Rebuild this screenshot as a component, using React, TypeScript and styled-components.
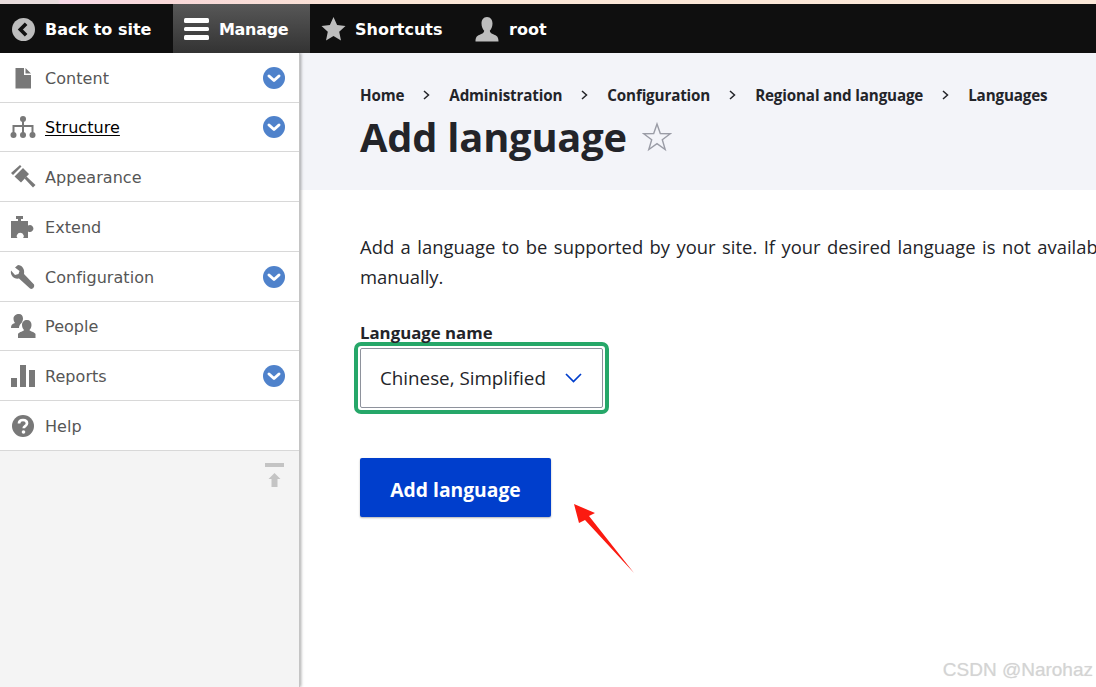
import React from "react";
import styled, { createGlobalStyle } from "styled-components";

const Global = createGlobalStyle`
  html, body { margin: 0; padding: 0; height: 100%; background: #fff; overflow: hidden; }
  #root { height: 100%; }
  * { box-sizing: border-box; }
`;

const Page = styled.div`
  position: relative;
  width: 1096px;
  height: 687px;
  display: flex;
  flex-direction: column;
  overflow: hidden;
  font-family: "Open Sans", "Noto Sans", sans-serif;
`;

const TopStrip = styled.div`
  height: 4px;
  flex: none;
  background: linear-gradient(90deg, #e8dcdc 0, #e8dcdc 58px, #f6d8e6 60px, #f8d8d8 170px, #fbe6d6 400px, #fbe8d8 1096px);
`;

const Toolbar = styled.nav`
  height: 49px;
  flex: none;
  display: flex;
  align-items: stretch;
  background: #0f0f0f;
  font-family: "DejaVu Sans", Verdana, sans-serif;
  font-weight: 700;
  font-size: 16px;
  color: #fff;
  position: relative;
  z-index: 2;
`;

const ToolItem = styled.div<{ $w: number; $active?: boolean; $gap: number; $pl: number }>`
  width: ${(p) => p.$w}px;
  display: flex;
  align-items: center;
  gap: ${(p) => p.$gap}px;
  padding-left: ${(p) => p.$pl}px;
  padding-top: 1px;
  letter-spacing: ${(p) => (p.$active ? "-0.3px" : "0")};
  background: ${(p) => (p.$active ? "linear-gradient(#575757, #333333)" : "transparent")};
  white-space: nowrap;
`;

const Body = styled.div`
  flex: 1;
  display: flex;
  min-height: 0;
`;

const Sidebar = styled.aside`
  width: 300px;
  flex: none;
  background: #f4f4f4;
  border-right: 1px solid #c4c4c4;
  box-shadow: 1px 0 3px rgba(0, 0, 0, 0.35);
  display: flex;
  flex-direction: column;
  font-family: "DejaVu Sans", Verdana, sans-serif;
  position: relative;
  z-index: 1;
`;

const MenuRow = styled.div<{ $h: number }>`
  height: ${(p) => p.$h}px;
  flex: none;
  display: flex;
  align-items: center;
  background: #fff;
  border-bottom: 1px solid #d8d8d8;
  padding: 0 14px 0 10px;
`;

const MenuIcon = styled.span`
  width: 26px;
  height: 26px;
  flex: none;
  display: flex;
  align-items: center;
  justify-content: center;
  margin-right: 9px;
`;

const MenuLabel = styled.span<{ $current?: boolean }>`
  flex: 1;
  font-size: 16px;
  line-height: 22px;
  padding-top: 2px;
  letter-spacing: 0.05px;
  color: ${(p) => (p.$current ? "#000" : "#565656")};
  text-decoration: ${(p) => (p.$current ? "underline" : "none")};
  text-underline-offset: 2px;
`;

const Collapse = styled.div`
  display: flex;
  justify-content: flex-end;
  padding: 12px 14px 0 0;
`;

const Main = styled.main`
  flex: 1;
  min-width: 0;
  display: flex;
  flex-direction: column;
  color: #232429;
  overflow: hidden;
`;

const Header = styled.header`
  height: 137px;
  flex: none;
  background: #f3f4f9;
  padding: 31px 0 0 60px;
`;

const Crumbs = styled.div`
  display: flex;
  align-items: center;
  height: 22px;
  font-size: 15.2px;
  font-weight: 700;
  white-space: nowrap;
  letter-spacing: -0.15px;
`;

const Sep = styled.span`
  width: 45px;
  flex: none;
  display: flex;
  justify-content: center;
`;

const TitleRow = styled.div`
  display: flex;
  align-items: center;
  gap: 15px;
  margin-top: 7px;
`;

const Title = styled.h1`
  margin: 0;
  font-size: 39.8px;
  line-height: 48px;
  font-weight: 700;
  letter-spacing: -0.2px;
  white-space: nowrap;
`;

const Content = styled.div`
  padding: 42px 0 0 60px;
`;

const Intro = styled.p`
  margin: 0;
  width: 1030px;
  font-size: 18.4px;
  line-height: 30px;
  word-spacing: 1.7px;
`;

const FieldLabel = styled.label`
  display: block;
  margin-top: 30px;
  font-size: 16.8px;
  font-weight: 700;
  line-height: 22px;
`;

const SelectRing = styled.div`
  width: 255px;
  height: 72px;
  margin: -2px 0 0 -6px;
  border: 4px solid #26a769;
  border-radius: 7px;
  padding: 2px;
  background: #fff;
`;

const SelectBox = styled.div`
  height: 100%;
  border: 1px solid #8e929c;
  border-radius: 2px;
  display: flex;
  align-items: center;
  justify-content: space-between;
  padding: 0 20px 0 19px;
  font-size: 18.8px;
  white-space: nowrap;
`;

const Submit = styled.button`
  display: block;
  width: 191px;
  height: 59px;
  margin-top: 44px;
  padding: 3px 0 0;
  border: 0;
  border-radius: 2px;
  background: #003ecc;
  box-shadow: 0 1px 2px rgba(0, 0, 0, 0.3);
  color: #fff;
  font-family: inherit;
  font-size: 19.3px;
  font-weight: 700;
`;

const ArrowMark = styled.svg`
  position: absolute;
  left: 570px;
  top: 500px;
`;

const Watermark = styled.div`
  position: absolute;
  right: 3px;
  bottom: 6px;
  font-family: "Liberation Sans", Arial, sans-serif;
  font-size: 19px;
  color: #d4d4d4;
  text-shadow: 0 0 1px #e4e4e4;
`;

const G = "#787878";
const T = "#bdbdbd";

const Chevron = () => (
  <svg width="22" height="22" viewBox="0 0 22 22">
    <circle cx="11" cy="11" r="11" fill="#4f82cb" />
    <path d="M6 9l5 4.500L16 9" fill="none" stroke="#fff" strokeWidth="3" strokeLinecap="round" strokeLinejoin="round" />
  </svg>
);

const icons: Record<string, React.ReactNode> = {
  content: (
    <svg width="18" height="22" viewBox="0 0 18 22"><path d="M1.500 1h8.500v7h7v13.500H1.500zM11.500 1l5.500 5.500h-5.500z" fill={G} /></svg>
  ),
  structure: (
    <svg width="26" height="24" viewBox="0 0 26 24" fill={G}>
      <circle cx="13" cy="4" r="3" /><circle cx="3.500" cy="20" r="3" /><circle cx="13" cy="20" r="3" /><circle cx="22.500" cy="20" r="3" />
      <path d="M12 6h2v4h9.500v8h-2v-6H14v6h-2v-6H4.500v6h-2v-8H12z" />
    </svg>
  ),
  appearance: (
    <svg width="26" height="26" viewBox="0 0 26 26" fill={G}>
      <path d="M1 9l9-8 1.500 1.500-8.500 8.500zM4.500 12.500L13 4l6 6-8 8.500z" />
      <path d="M14.500 14.500l2-2 9 8.500-2.500 2.500z" />
    </svg>
  ),
  extend: (
    <svg width="26" height="24" viewBox="0 0 26 24" fill={G}>
      <path d="M1 6h7V4H6V1h7v3h-2v2h7v4.500a3.500 3.500 0 1 1 0 6V23h-5c1-1 1-2 .5-3a3.500 3.500 0 0 0-6.500 0c-.5 1-.5 2 .5 3H1z" />
    </svg>
  ),
  config: (
    <svg width="26" height="26" viewBox="0 0 26 26" fill={G}>
      <path d="M8 1L5 3.500 9.500 7l-1 3-3.500 1L1 6.500c-1 5 3 9 8 8l11 10c2 1.500 5-1 4-4L14 10c1-5-2-9-6-9z" />
    </svg>
  ),
  people: (
    <svg width="26" height="26" viewBox="0 0 26 26" fill={G}>
      <path d="M9 1c2.500 0 4 2 4 4.500 0 2-1 3.500-1.500 4.500-1.500 1-2.500 3-2.500 5H1c0-3 1-4 4-5-1-1-1.500-3-1.500-4.500C3.500 3 6 1 9 1z" />
      <path d="M17 7c3 0 4.500 2 4.500 5 0 2-1 4-2 5 0 1 5 2 6 4v4H8v-4c1-2 6-3 6-4-1-1-2-3-2-5 0-3 2-5 5-5z" />
    </svg>
  ),
  reports: (
    <svg width="26" height="24" viewBox="0 0 26 24" fill={G}>
      <rect x="1" y="14" width="6" height="9" /><rect x="10" y="1" width="6" height="22" /><rect x="19" y="6" width="6" height="17" />
    </svg>
  ),
  help: (
    <svg width="22" height="22" viewBox="0 0 22 22">
      <circle cx="11" cy="11" r="11" fill={G} />
      <path d="M7 8.500c0-2.500 2-3.500 4-3.500s4 1 4 3.300c0 3-3.300 2.700-3.300 5" fill="none" stroke="#fff" strokeWidth="2.700" />
      <circle cx="11.500" cy="17" r="1.800" fill="#fff" />
    </svg>
  ),
};

const items = [
  { key: "content", label: "Content", h: 50, more: true },
  { key: "structure", label: "Structure", h: 49, more: true, current: true },
  { key: "appearance", label: "Appearance", h: 50 },
  { key: "extend", label: "Extend", h: 50 },
  { key: "config", label: "Configuration", h: 50, more: true },
  { key: "people", label: "People", h: 49 },
  { key: "reports", label: "Reports", h: 50, more: true },
  { key: "help", label: "Help", h: 50 },
];

const crumbs = ["Home", "Administration", "Configuration", "Regional and language", "Languages"];

export default function App() {
  return (
    <Page>
      <Global />
      <TopStrip />
      <Toolbar>
        <ToolItem $w={173} $gap={10} $pl={12}>
          <svg width="23" height="23" viewBox="0 0 22 22">
            <circle cx="11" cy="11" r="11" fill={T} />
            <path d="M13.500 5.500L8 11l5.500 5.500" fill="none" stroke="#111" strokeWidth="3.500" />
          </svg>
          Back to site
        </ToolItem>
        <ToolItem $w={137} $active $gap={9} $pl={11}>
          <svg width="26" height="24" viewBox="0 0 26 24" fill="#fff">
            <rect y="1" width="25" height="5" rx="1.500" /><rect y="10" width="25" height="4" rx="1.500" /><rect y="18" width="25" height="5" rx="1.500" />
          </svg>
          Manage
        </ToolItem>
        <ToolItem $w={155} $gap={9} $pl={11}>
          <svg width="25" height="24" viewBox="0 0 25 24" fill={T}>
            <path d="M12.500 0l3.600 8 8.400.9-6.300 5.800L20 23.500l-7.500-4.500L5 23.500l1.800-8.800L.5 8.900 8.900 8z" />
          </svg>
          Shortcuts
        </ToolItem>
        <ToolItem $w={120} $gap={10} $pl={10}>
          <svg width="24" height="25" viewBox="0 0 24 25" fill={T}>
            <path d="M12 0c3.800 0 5.500 3 5.500 6.500 0 3-1.300 6-2.700 7.300 0 2 2 3 5 4.200 2 .8 3.700 2 3.700 6.500H.5c0-4.500 1.700-5.700 3.700-6.500 3-1.200 5-2.200 5-4.200C7.800 12.500 6.500 9.500 6.500 6.500 6.500 3 8.200 0 12 0z" />
          </svg>
          root
        </ToolItem>
      </Toolbar>
      <Body>
        <Sidebar>
          {items.map((it) => (
            <MenuRow key={it.key} $h={it.h}>
              <MenuIcon>{icons[it.key]}</MenuIcon>
              <MenuLabel $current={it.current}>{it.label}</MenuLabel>
              {it.more && <Chevron />}
            </MenuRow>
          ))}
          <Collapse>
            <svg width="20" height="24" viewBox="0 0 20 24" fill="#c4c4c4">
              <rect y="0" width="19" height="4" />
              <path d="M9.500 10l6 6h-3v8h-6v-8h-3z" />
            </svg>
          </Collapse>
        </Sidebar>
        <Main>
          <Header>
            <Crumbs>
              {crumbs.map((c, i) => (
                <React.Fragment key={c}>
                  {i > 0 && (
                    <Sep>
                      <svg width="7" height="10" viewBox="0 0 7 10">
                        <path d="M1 1l4.500 4L1 9" fill="none" stroke="#232429" strokeWidth="1.500" />
                      </svg>
                    </Sep>
                  )}
                  {c}
                </React.Fragment>
              ))}
            </Crumbs>
            <TitleRow>
              <Title>Add language</Title>
              <svg width="30" height="30" viewBox="0 0 30 30">
                <path d="M15 2l3.300 9.500 10 .2-8 6.100 2.900 9.700L15 21.700l-8.200 5.800 2.900-9.700-8-6.100 10-.2z" fill="none" stroke="#9a9ca6" strokeWidth="1.400" />
              </svg>
            </TitleRow>
          </Header>
          <Content>
            <Intro>
              Add a language to be supported by your site. If your desired language is not available, add a custom language
              manually.
            </Intro>
            <FieldLabel>Language name</FieldLabel>
            <SelectRing>
              <SelectBox>
                Chinese, Simplified
                <svg width="17" height="10" viewBox="0 0 17 10">
                  <path d="M1 1l7.500 7.500L16 1" fill="none" stroke="#003ecc" strokeWidth="1.700" />
                </svg>
              </SelectBox>
            </SelectRing>
            <Submit>Add language</Submit>
          </Content>
        </Main>
      </Body>
      <ArrowMark width="70" height="80" viewBox="0 0 70 80">
        <path d="M4 4l21 9-6 3 45 57L15 20l-6 3z" fill="#fb1a10" />
      </ArrowMark>
      <Watermark>CSDN @Narohaz</Watermark>
    </Page>
  );
}
